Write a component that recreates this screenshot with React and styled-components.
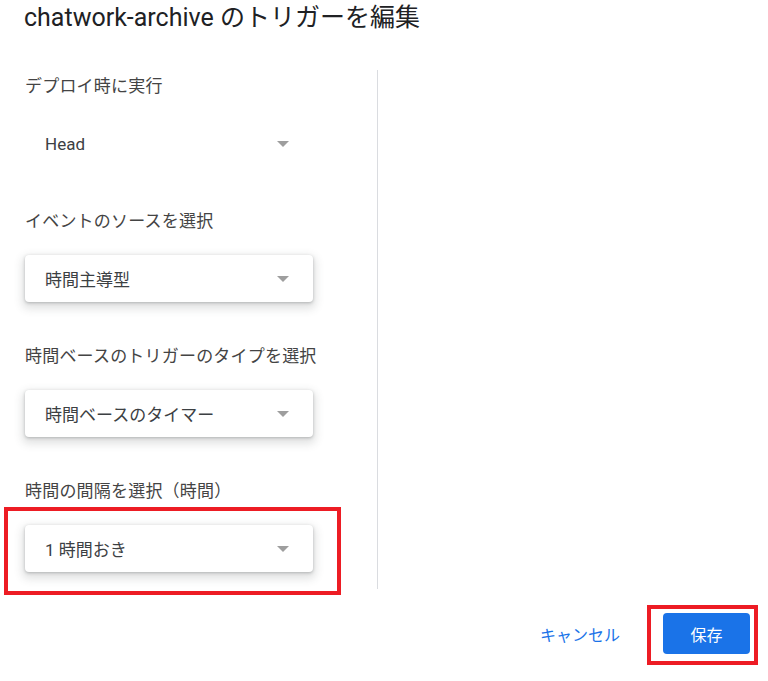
import React from "react";
import styled, { createGlobalStyle } from "styled-components";

const GlobalStyle = createGlobalStyle`
  html, body {
    margin: 0;
    padding: 0;
    background: #ffffff;
  }
  body {
    font-family: Roboto, "Noto Sans CJK JP", "Noto Sans", sans-serif;
    color: #3c4043;
  }
`;

const fields = [
  { label: "デプロイ時に実行", value: "Head", flat: true },
  { label: "イベントのソースを選択", value: "時間主導型" },
  { label: "時間ベースのトリガーのタイプを選択", value: "時間ベースのタイマー" },
  { label: "時間の間隔を選択（時間）", value: "1 時間おき", marked: true },
];

export default function App() {
  return (
    <Page>
      <GlobalStyle />
      <Title>chatwork-archive のトリガーを編集</Title>

      <Body>
        <Column>
          {fields.map((f) => (
            <Field key={f.label}>
              <Label>{f.label}</Label>
              {f.marked ? (
                <Marked>
                  <Select value={f.value} flat={f.flat} />
                  <RedBox $top={-18} $left={-21} $right={-28} $bottom={-23} />
                </Marked>
              ) : (
                <Select value={f.value} flat={f.flat} />
              )}
            </Field>
          ))}
        </Column>
      </Body>

      <Footer>
        <CancelButton>キャンセル</CancelButton>
        <Marked>
          <SaveButton>保存</SaveButton>
          <RedBox $top={-8} $left={-16} $right={-8} $bottom={-11} />
        </Marked>
      </Footer>
    </Page>
  );
}

function Select({ value, flat }) {
  return (
    <SelectBox $flat={flat}>
      <span>{value}</span>
      <Arrow />
    </SelectBox>
  );
}

const Page = styled.div`
  width: 768px;
  height: 681px;
  overflow: hidden;
`;

const Title = styled.h1`
  margin: 0;
  padding-left: 24px;
  height: 36px;
  line-height: 36px;
  font-size: 25px;
  font-weight: 400;
  color: #202124;
`;

const Body = styled.div`
  display: flex;
  margin-top: 34px;
`;

const Column = styled.div`
  box-sizing: border-box;
  width: 378px;
  padding: 4px 0 17px 25px;
  border-right: 1px solid #dadce0;
  display: flex;
  flex-direction: column;
  gap: 42px;
`;

const Field = styled.div`
  display: flex;
  flex-direction: column;
  gap: 22px;
`;

const Label = styled.div`
  font-size: 17px;
  line-height: 24px;
  letter-spacing: 0.2px;
  color: #444;
`;

const SelectBox = styled.div`
  box-sizing: border-box;
  width: 288px;
  height: 47px;
  padding: 0 24px 0 20px;
  display: flex;
  align-items: center;
  justify-content: space-between;
  font-size: 17px;
  color: #3c4043;
  background: #fff;
  border-radius: 4px;
  box-shadow: ${(p) =>
    p.$flat
      ? "none"
      : "0 1px 3px 0 rgba(60, 64, 67, 0.3), 0 4px 8px 3px rgba(60, 64, 67, 0.15)"};
`;

const Arrow = styled.span`
  width: 0;
  height: 0;
  border-left: 6px solid transparent;
  border-right: 6px solid transparent;
  border-top: 6px solid #9e9e9e;
`;

const Marked = styled.div`
  position: relative;
  align-self: flex-start;
`;

const RedBox = styled.div`
  position: absolute;
  top: ${(p) => p.$top}px;
  left: ${(p) => p.$left}px;
  right: ${(p) => p.$right}px;
  bottom: ${(p) => p.$bottom}px;
  border: 4px solid #ed1c24;
  pointer-events: none;
`;

const Footer = styled.div`
  display: flex;
  justify-content: flex-end;
  align-items: center;
  margin-top: 24px;
  padding-right: 18px;
`;

const CancelButton = styled.button`
  background: none;
  border: none;
  padding: 0;
  margin-right: 43px;
  font-family: inherit;
  font-size: 16px;
  color: #1a73e8;
  cursor: pointer;
`;

const SaveButton = styled.button`
  display: block;
  width: 87px;
  height: 41px;
  border: none;
  border-radius: 4px;
  background: #1a73e8;
  color: #fff;
  font-family: inherit;
  font-size: 16px;
  cursor: pointer;
`;
